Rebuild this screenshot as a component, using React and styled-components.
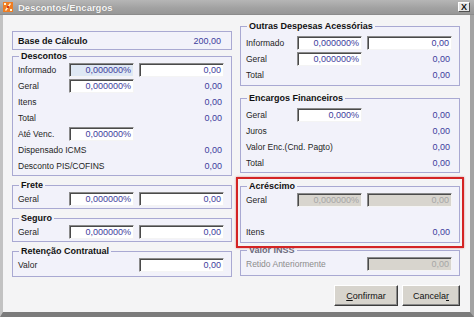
import styled, { createGlobalStyle } from "styled-components";

const GlobalStyle = createGlobalStyle`
  * { box-sizing: border-box; }
  html, body { margin: 0; padding: 0; background: #7a7a7a; }
  body { font-family: "Liberation Sans", Arial, sans-serif; }
`;

const Window = styled.div`
  width: 474px;
  height: 317px;
  display: flex;
  flex-direction: column;
  overflow: hidden;
`;

const TitleBar = styled.div`
  flex: 0 0 15px;
  display: flex;
  align-items: center;
  padding: 0 4px 0 3px;
  background: linear-gradient(#b6b6b6, #a2a2a2 55%, #979797);
  border-bottom: 1px solid #8c8c8c;
`;

const Title = styled.span`
  margin-left: 5px;
  font: bold 9.5px "Liberation Sans", Arial, sans-serif;
  color: #f6f6f6;
  text-shadow: 0 0 1px rgba(80, 80, 80, 0.6);
  flex: 1;
`;

const CloseButton = styled.div`
  width: 12px;
  height: 10px;
  display: flex;
  align-items: center;
  justify-content: center;
  background: #e6e6e6;
  border: 1px solid;
  border-color: #ffffff #505050 #505050 #ffffff;
  font: bold 9px "Liberation Sans", Arial, sans-serif;
  color: #111;
  line-height: 1;
`;

const Body = styled.div`
  flex: 1;
  display: flex;
  flex-direction: column;
  background: #f4f4f5;
  border-left: 3px solid #c2c2c2;
  border-right: 4px solid #a3a3a3;
  border-bottom: 5px solid #7b7b7b;
  padding: 6px 10px 0 9px;
`;

const Columns = styled.div`
  display: grid;
  grid-template-columns: 220px 220px;
  column-gap: 8px;
  align-items: start;
`;

const Column = styled.div`
  display: flex;
  flex-direction: column;
  padding-top: ${(p) => p.$top || 0}px;
`;

const BaseBox = styled.div`
  height: 19px;
  display: flex;
  align-items: center;
  justify-content: space-between;
  padding: 0 8px 0 5px;
  border: 1px solid #a9a9d2;
  background: #f2f2fa;
`;

const Strong = styled.span`
  font: bold 9px "Liberation Sans", Arial, sans-serif;
  color: #111;
`;

const Group = styled.fieldset`
  margin: ${(p) => p.$mt || 0}px 0 0 0;
  padding: ${(p) => p.$pt || 1}px 7px ${(p) => p.$pb || 1}px 5px;
  border: 1px solid #a9a9d2;
  background: #f2f2fa;
  min-inline-size: 0;
`;

const Legend = styled.legend`
  margin-left: 1px;
  padding: 0 2px;
  font: bold 9px "Liberation Sans", Arial, sans-serif;
  line-height: 10px;
  color: ${(p) => (p.$disabled ? "#6c6c7e" : "#111")};
`;

const Row = styled.div`
  display: grid;
  grid-template-columns: 51px 65px 1fr;
  height: 16px;
  align-items: center;
`;

const Label = styled.span`
  grid-column: 1;
  font-size: 8.5px;
  white-space: nowrap;
  color: ${(p) => (p.$disabled ? "#8c8c8c" : "#1e1e1e")};
`;

const Field = styled.div`
  height: 14px;
  display: flex;
  align-items: center;
  justify-content: flex-end;
  padding-right: 2px;
  font-size: 9px;
  white-space: nowrap;
  color: ${(p) => (p.$disabled ? "#a6a6a6" : "#3d3d9c")};
  background: ${(p) => (p.$disabled ? "#d8d5ce" : p.$focus ? "#dfe8f4" : "#ffffff")};
  border-top: 1px solid #8a8a8a;
  border-left: 1px solid #8a8a8a;
  border-right: 1px solid #f4f4f4;
  border-bottom: 1px solid #f4f4f4;
  box-shadow: inset 1px 1px 0 #4a4a4a;
`;

const Percent = styled(Field)`
  grid-column: 2;
`;

const Amount = styled(Field)`
  grid-column: 3;
  margin-left: 5px;
`;

const Value = styled.span`
  grid-column: 3;
  text-align: right;
  padding-right: 2px;
  font-size: 9px;
  color: #3d3d9c;
`;

const Highlight = styled.div`
  position: relative;
  z-index: 1;
  margin: 4px -4px 0;
  padding: 2px 2px 3px;
  border: 2px solid #d42424;
  background: #f4f4f5;
  box-shadow: 0 0 2px rgba(180, 20, 20, 0.45);
`;

const Footer = styled.div`
  display: flex;
  justify-content: flex-end;
  gap: 4px;
  margin-top: 8px;
`;

const Button = styled.button`
  width: ${(p) => p.$w}px;
  height: 21px;
  padding: 0;
  font: 9px "Liberation Sans", Arial, sans-serif;
  color: #111;
  background: #d7d4cd;
  border: 1px solid;
  border-color: #ffffff #3c3c3c #3c3c3c #ffffff;
  box-shadow: inset -1px -1px 0 #8a8a8a;
  u { text-decoration: underline; }
`;

function TitleIcon() {
  return (
    <svg width="10" height="10" viewBox="0 0 10 10">
      <rect width="10" height="10" fill="#ef7d22" />
      <rect x="1" y="1" width="2" height="2" fill="#fff3d8" />
      <rect x="7" y="7" width="2" height="2" fill="#fff3d8" />
      <path d="M7.5 1.5 L2.5 8.5" stroke="#fff3d8" strokeWidth="1.3" />
      <rect x="4" y="4" width="2" height="2" fill="#d4361c" />
    </svg>
  );
}

// dimLabel greys the caption, disabled greys only the input boxes
function Line({ label, pct, amount, value, focus, disabled, dimLabel }) {
  return (
    <Row>
      <Label $disabled={dimLabel}>{label}</Label>
      {pct && <Percent $focus={focus} $disabled={disabled}>{pct}</Percent>}
      {amount && <Amount $disabled={disabled}>{amount}</Amount>}
      {value && <Value>{value}</Value>}
    </Row>
  );
}

export default function App() {
  return (
    <>
      <GlobalStyle />
      <Window>
        <TitleBar>
          <TitleIcon />
          <Title>Descontos/Encargos</Title>
          <CloseButton>X</CloseButton>
        </TitleBar>
        <Body>
          <Columns>
            <Column $top={10}>
              <BaseBox>
                <Strong>Base de Cálculo</Strong>
                <Value>200,00</Value>
              </BaseBox>
              <Group $mt={1}>
                <Legend>Descontos</Legend>
                <Line label="Informado" pct="0,000000%" amount="0,00" focus />
                <Line label="Geral" pct="0,000000%" value="0,00" />
                <Line label="Itens" value="0,00" />
                <Line label="Total" value="0,00" />
                <Line label="Até Venc." pct="0,000000%" />
                <Line label="Dispensado ICMS" value="0,00" />
                <Line label="Desconto PIS/COFINS" value="0,00" />
              </Group>
              <Group $mt={4}>
                <Legend>Frete</Legend>
                <Line label="Geral" pct="0,000000%" amount="0,00" />
              </Group>
              <Group $mt={4}>
                <Legend>Seguro</Legend>
                <Line label="Geral" pct="0,000000%" amount="0,00" />
              </Group>
              <Group $mt={4} $pb={3}>
                <Legend>Retenção Contratual</Legend>
                <Line label="Valor" amount="0,00" />
              </Group>
            </Column>
            <Column>
              <Group $pt={4} $pb={2}>
                <Legend>Outras Despesas Acessórias</Legend>
                <Line label="Informado" pct="0,000000%" amount="0,00" />
                <Line label="Geral" pct="0,000000%" value="0,00" />
                <Line label="Total" value="0,00" />
              </Group>
              <Group $mt={7} $pt={4} $pb={0}>
                <Legend>Encargos Financeiros</Legend>
                <Line label="Geral" pct="0,000%" value="0,00" />
                <Line label="Juros" value="0,00" />
                <Line label="Valor Enc.(Cnd. Pagto)" value="0,00" />
                <Line label="Total" value="0,00" />
              </Group>
              <Highlight>
                <Group $pb={2}>
                  <Legend>Acréscimo</Legend>
                  <Line label="Geral" pct="0,000000%" amount="0,00" disabled />
                  <Row />
                  <Line label="Itens" value="0,00" />
                </Group>
              </Highlight>
              <Group $mt={-3} $pb={3}>
                <Legend $disabled>Valor INSS</Legend>
                <Line label="Retido Anteriormente" amount="0,00" disabled dimLabel />
              </Group>
            </Column>
          </Columns>
          <Footer>
            <Button $w={64}>
              <u>C</u>onfirmar
            </Button>
            <Button $w={58}>
              Cancela<u>r</u>
            </Button>
          </Footer>
        </Body>
      </Window>
    </>
  );
}
